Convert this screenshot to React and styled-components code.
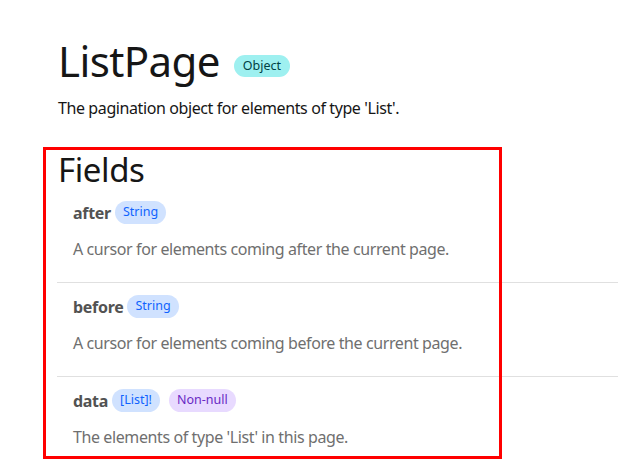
import React from "react";
import styled, { createGlobalStyle } from "styled-components";

const Global = createGlobalStyle`
  html, body { margin: 0; padding: 0; background: #ffffff; }
  body { font-family: "Noto Sans", "Open Sans", sans-serif; color: #161616; }
  * { box-sizing: border-box; }
`;

const Page = styled.main`
  padding: 36px 0 0 57px;
  overflow: hidden;
`;

const TitleRow = styled.div`
  display: flex;
  align-items: flex-start;
  gap: 14px;
  padding-left: 1px;
`;

const Title = styled.h1`
  margin: 0;
  font-size: 42px;
  line-height: 50px;
  font-weight: 400;
  letter-spacing: -0.6px;
  color: #161616;
`;

const Badge = styled.span`
  display: inline-flex;
  align-items: center;
  height: ${(p) => (p.$small ? 22 : 23)}px;
  margin-top: ${(p) => p.$top || 0}px;
  padding: 0 ${(p) => (p.$small ? 9 : 8)}px;
  border-radius: 12px;
  font-size: 12.5px;
  line-height: 1;
  background: ${(p) => p.$bg};
  color: ${(p) => p.$fg};
  white-space: nowrap;
`;

const Lead = styled.p`
  margin: 10px 0 0 1px;
  font-size: 16px;
  line-height: 24px;
  letter-spacing: -0.4px;
  color: #161616;
`;

const Section = styled.section`
  position: relative;
  margin-top: 30px;
`;

const Highlight = styled.div`
  position: absolute;
  left: -14px;
  top: -3px;
  width: 459px;
  height: 312px;
  border: 3px solid #ff0000;
  pointer-events: none;
`;

const SectionTitle = styled.h2`
  margin: 0 0 0 1px;
  font-size: 33px;
  line-height: 40px;
  font-weight: 400;
  letter-spacing: -0.4px;
  color: #161616;
`;

const FieldList = styled.ul`
  list-style: none;
  margin: 0;
  padding: 0;
`;

const FieldItem = styled.li`
  padding: ${(p) => (p.$first ? 11 : 12)}px 16px 21px 16px;
  border-top: ${(p) => (p.$first ? "none" : "1px solid #e0e0e0")};
`;

const FieldHead = styled.div`
  display: flex;
  align-items: center;
  gap: 4px;
  height: 23px;
`;

const FieldName = styled.span`
  font-size: 16px;
  font-weight: 700;
  letter-spacing: -0.3px;
  color: #525252;
`;

const Badges = styled.span`
  display: inline-flex;
  gap: 9px;
`;

const FieldDesc = styled.p`
  margin: 13px 0 0 0;
  font-size: 16px;
  line-height: 24px;
  letter-spacing: -0.4px;
  color: #6f6f6f;
`;

const BLUE = { bg: "#d0e2ff", fg: "#0f62fe" };
const PURPLE = { bg: "#e8daff", fg: "#6929c4" };

const fields = [
  { name: "after", badges: [{ t: "String", ...BLUE }], desc: "A cursor for elements coming after the current page." },
  { name: "before", badges: [{ t: "String", ...BLUE }], desc: "A cursor for elements coming before the current page." },
  {
    name: "data",
    badges: [{ t: "[List]!", ...BLUE }, { t: "Non-null", ...PURPLE }],
    desc: "The elements of type 'List' in this page.",
  },
];

export default function App() {
  return (
    <>
      <Global />
      <Page>
        <TitleRow>
          <Title>ListPage</Title>
          <Badge $small $top={19} $bg="#9ef0f0" $fg="#004144">Object</Badge>
        </TitleRow>
        <Lead>The pagination object for elements of type 'List'.</Lead>
        <Section>
          <SectionTitle>Fields</SectionTitle>
          <FieldList>
            {fields.map((f, i) => (
              <FieldItem key={f.name} $first={i === 0}>
                <FieldHead>
                  <FieldName>{f.name}</FieldName>
                  <Badges>
                    {f.badges.map((b) => (
                      <Badge key={b.t} $bg={b.bg} $fg={b.fg}>{b.t}</Badge>
                    ))}
                  </Badges>
                </FieldHead>
                <FieldDesc>{f.desc}</FieldDesc>
              </FieldItem>
            ))}
          </FieldList>
          <Highlight />
        </Section>
      </Page>
    </>
  );
}
